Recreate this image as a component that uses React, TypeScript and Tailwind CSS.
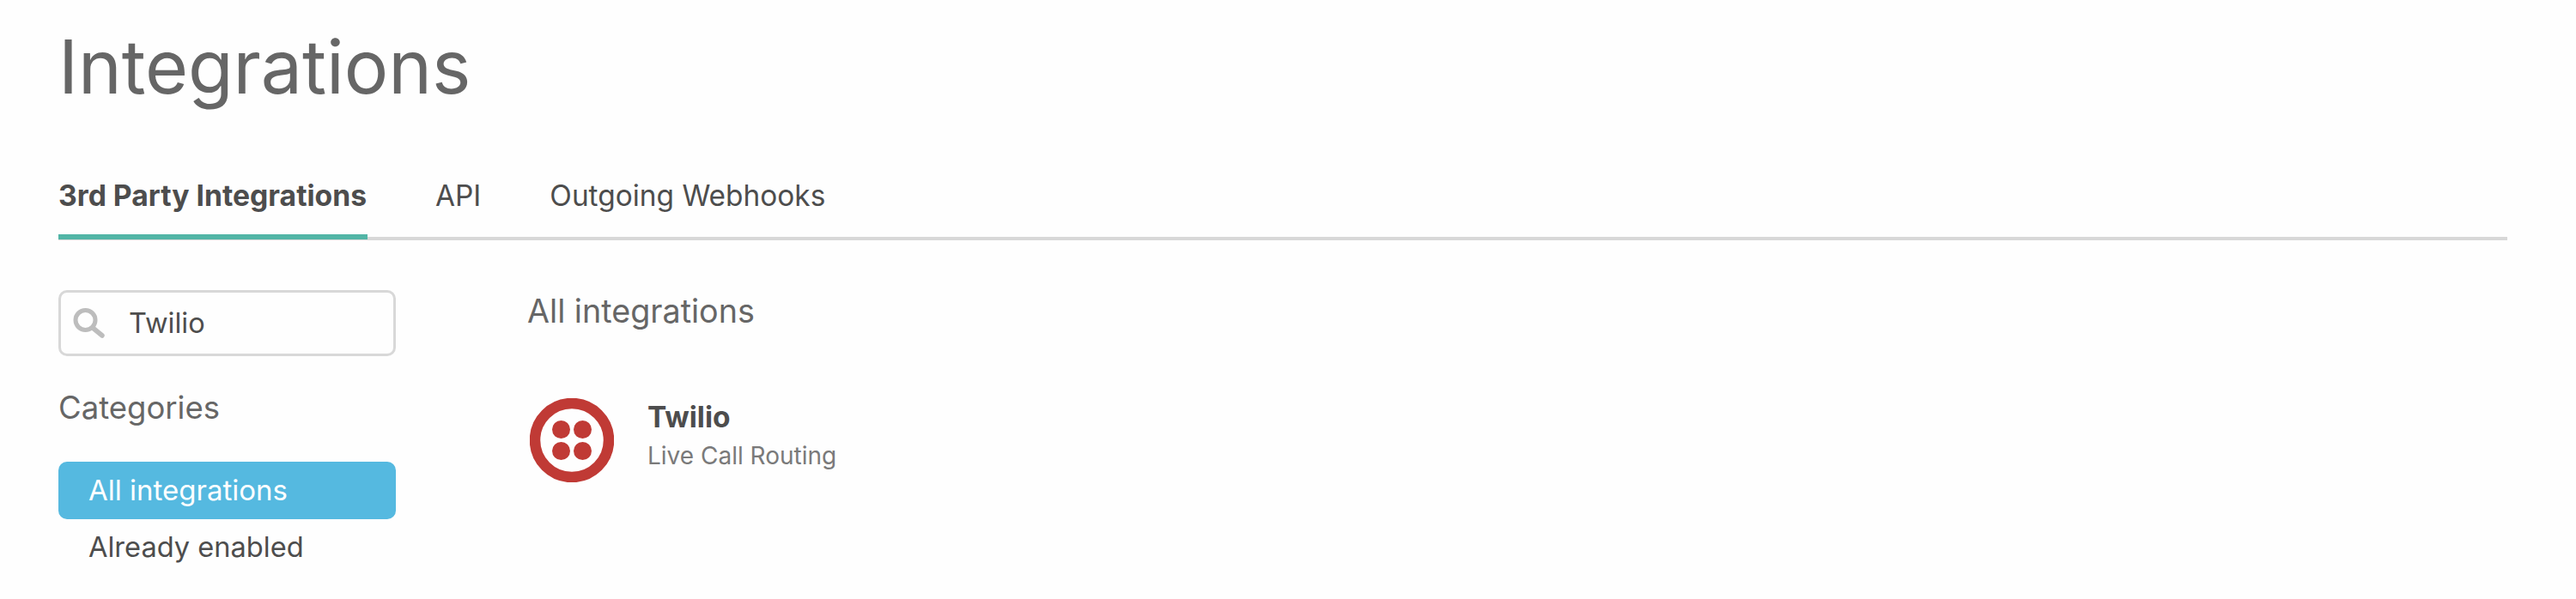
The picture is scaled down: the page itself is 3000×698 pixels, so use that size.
import React from "react";

const font = { fontFamily: "Inter, 'Noto Sans', sans-serif" };

function Twilio() {
  return (
    <svg width="98" height="98" viewBox="0 0 98 98" className="shrink-0">
      <circle cx="49" cy="49" r="43" fill="none" stroke="#c03a35" strokeWidth="12.5" />
      <circle cx="36.5" cy="36.5" r="10.5" fill="#c03a35" />
      <circle cx="61.5" cy="36.5" r="10.5" fill="#c03a35" />
      <circle cx="36.5" cy="61.5" r="10.5" fill="#c03a35" />
      <circle cx="61.5" cy="61.5" r="10.5" fill="#c03a35" />
    </svg>
  );
}

export default function App() {
  return (
    <div className="w-[3000px] h-[698px] overflow-hidden bg-[#fefefe] pl-[68px] pr-[80px]" style={font}>
      <h1 className="h-[160px] pt-[26px] text-[86px] leading-[104px] text-[#666666] tracking-[-0.1px]">Integrations</h1>
      <div className="flex h-[120px] border-b-[4px] border-[#d8d8d8]">
        <div className="h-[119px] w-[360px] border-b-[6px] border-[#51b5a6] pt-[47px] text-[33.7px] leading-[42px] font-bold text-[#4d4d4d] whitespace-nowrap">3rd Party Integrations</div>
        <div className="ml-[79px] pt-[47px] text-[33.4px] leading-[42px] text-[#4d4d4d]">API</div>
        <div className="ml-[80px] pt-[47px] text-[33.4px] leading-[42px] text-[#4d4d4d] whitespace-nowrap">Outgoing Webhooks</div>
      </div>
      <div className="flex">
        <aside className="w-[393px] pt-[58px]">
          <div className="flex h-[77px] items-center rounded-[10px] border-[3px] border-[#d8d8d8] pl-[13px]">
            <svg width="40" height="38" viewBox="0 0 40 38" className="shrink-0">
              <circle cx="15.5" cy="15" r="11.5" fill="none" stroke="#bdbdbd" strokeWidth="5" />
              <path d="M24 24 L35 33" stroke="#bdbdbd" strokeWidth="5.5" strokeLinecap="round" />
            </svg>
            <span className="ml-[26px] text-[32.5px] leading-[40px] text-[#4d4d4d]">Twilio</span>
          </div>
          <div className="mt-[38px] text-[36.5px] leading-[44px] text-[#666666]">Categories</div>
          <div className="mt-[41px] flex h-[67px] items-center rounded-[10px] bg-[#55b9e0] pl-[35px] text-[33px] text-white">All integrations</div>
          <div className="flex h-[64px] items-center pl-[35px] text-[32.6px] text-[#4d4d4d]">Already enabled</div>
        </aside>
        <main className="ml-[153px] pt-[60px]">
          <div className="text-[37.7px] leading-[44px] text-[#666666]">All integrations</div>
          <div className="mt-[80px] flex items-start">
            <div className="ml-[3px]">
              <Twilio />
            </div>
            <div className="ml-[39px] mt-[1px]">
              <div className="text-[33.5px] leading-[42px] font-bold text-[#4d4d4d]">Twilio</div>
              <div className="mt-[6px] text-[28px] leading-[36px] text-[#7a7a7a]">Live Call Routing</div>
            </div>
          </div>
        </main>
      </div>
    </div>
  );
}
